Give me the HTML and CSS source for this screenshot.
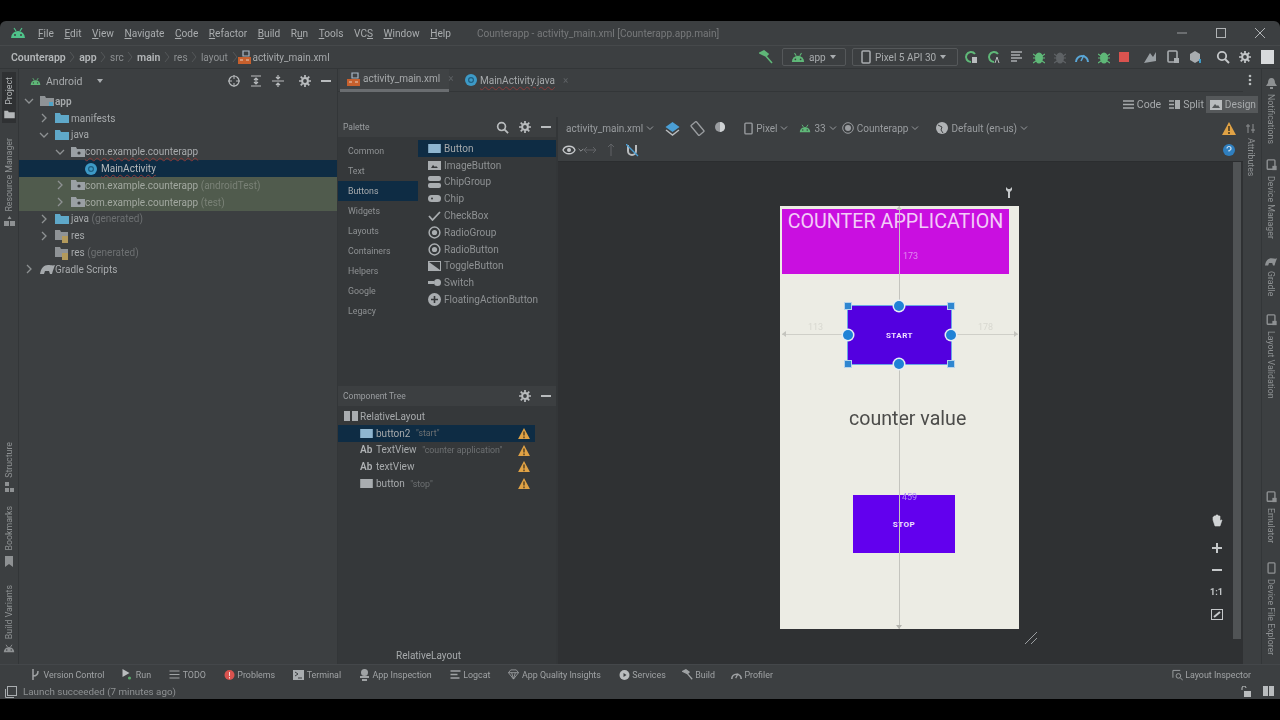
FILE: index.html
```html
<!DOCTYPE html>
<html lang="en">
<head>
  <meta charset="UTF-8">
  <title>Counterapp - activity_main.xml</title>
  <link rel="stylesheet" href="styles.css">
</head>
<body>
  <!-- shared icons -->
  <svg class="defs" width="0" height="0">
    <symbol id="droid" viewBox="0 0 16 12"><path d="M1 11a7 7 0 0 1 14 0z" fill="currentColor"/><path d="M4 1l2 3M12 1l-2 3" stroke="currentColor" stroke-width="1.2"/><circle cx="5" cy="8" r="1" fill="#3c3f41"/><circle cx="11" cy="8" r="1" fill="#3c3f41"/></symbol>
    <symbol id="gear" viewBox="0 0 14 14"><circle cx="7" cy="7" r="3.4" fill="none" stroke="currentColor" stroke-width="2.4"/><path d="M7 0v3M7 11v3M0 7h3M11 7h3M2 2l2 2M10 10l2 2M12 2l-2 2M4 10l-2 2" stroke="currentColor" stroke-width="2"/></symbol>
    <symbol id="search" viewBox="0 0 14 14"><circle cx="6" cy="6" r="4.2" fill="none" stroke="currentColor" stroke-width="1.8"/><path d="M9 9l4 4" stroke="currentColor" stroke-width="2"/></symbol>
    <symbol id="folder" viewBox="0 0 14 12"><path d="M0 1h5l1 2h8v8H0z" fill="currentColor"/></symbol>
    <symbol id="pkg" viewBox="0 0 14 12"><path d="M0 1h5l1 2h8v8H0z" fill="#9aa0a4"/><circle cx="8" cy="7" r="1.6" fill="#3c3f41"/></symbol>
    <symbol id="resfolder" viewBox="0 0 14 14"><path d="M0 1h5l1 2h7v8H0z" fill="#8f9396"/><rect x="7" y="7" width="6" height="7" fill="#b39a5c"/></symbol>
    <symbol id="xml" viewBox="0 0 13 14"><rect x="0" y="7" width="13" height="7" fill="#c7602d"/><path d="M5 1h6v5H5z" fill="none" stroke="#a9b7c6" stroke-width="1.2"/><path d="M2 10h3M8 10h3" stroke="#e8d0c0"/></symbol>
    <symbol id="cls" viewBox="0 0 12 12"><circle cx="6" cy="6" r="6" fill="#3d9ac7"/><circle cx="6" cy="6" r="2.4" fill="none" stroke="#1e5e80" stroke-width="1.2"/></symbol>
    <symbol id="chev-r" viewBox="0 0 8 10"><path d="M2 1l4 4-4 4" fill="none" stroke="currentColor" stroke-width="1.3"/></symbol>
    <symbol id="chev-d" viewBox="0 0 10 8"><path d="M1 2l4 4 4-4" fill="none" stroke="currentColor" stroke-width="1.3"/></symbol>
    <symbol id="warn" viewBox="0 0 14 13"><path d="M7 0l7 13H0z" fill="#e0a245"/><path d="M7 4v5M7 10v2" stroke="#4a3a20" stroke-width="1.6"/></symbol>
    <symbol id="bug" viewBox="0 0 12 14"><ellipse cx="6" cy="8" rx="4" ry="5.5" fill="currentColor"/><path d="M0 4l3 2M12 4l-3 2M0 8h2M10 8h2M0 13l3-2M12 13l-3-2" stroke="currentColor" stroke-width="1.2"/></symbol>
    <symbol id="phone" viewBox="0 0 10 14"><rect x="1" y="1" width="8" height="12" rx="1" fill="none" stroke="currentColor" stroke-width="1.5"/></symbol>
    <symbol id="monitor" viewBox="0 0 12 14"><rect x="1" y="1" width="9" height="11" rx="1" fill="none" stroke="currentColor" stroke-width="1.6"/><rect x="7" y="8" width="5" height="5" fill="currentColor"/></symbol>
    <symbol id="btn" viewBox="0 0 14 10"><rect width="14" height="10" fill="currentColor"/></symbol>
    <symbol id="radio" viewBox="0 0 14 14"><circle cx="7" cy="7" r="5.8" fill="none" stroke="currentColor" stroke-width="1.6"/><circle cx="7" cy="7" r="2.8" fill="currentColor"/></symbol>
    <symbol id="hammer" viewBox="0 0 14 14"><path d="M1 3l4-2 4 3-2 2zM6 5l7 8" fill="currentColor" stroke="currentColor" stroke-width="1.6"/></symbol>
    <symbol id="gauge" viewBox="0 0 14 12"><path d="M1 11a6 6 0 0 1 12 0" fill="none" stroke="currentColor" stroke-width="2"/><path d="M6 10l3-6" stroke="currentColor" stroke-width="1.6"/></symbol>
  </svg>

  <div class="window">
    <div class="titlebar">
      <svg class="logo" width="16" height="12"><use href="#droid"/></svg>
      <nav class="menu">
        <span><u>F</u>ile</span><span><u>E</u>dit</span><span><u>V</u>iew</span><span><u>N</u>avigate</span><span><u>C</u>ode</span><span><u>R</u>efactor</span><span><u>B</u>uild</span><span>R<u>u</u>n</span><span><u>T</u>ools</span><span>VC<u>S</u></span><span><u>W</u>indow</span><span><u>H</u>elp</span>
      </nav>
      <span class="title">Counterapp - activity_main.xml [Counterapp.app.main]</span>
      <div class="winbtns">
        <svg width="10" height="10"><path d="M0 5h10" stroke="#9a9da0"/></svg>
        <svg width="10" height="10"><rect x=".5" y=".5" width="9" height="9" fill="none" stroke="#b0b3b5"/></svg>
        <svg width="10" height="10"><path d="M0 0l10 10M10 0L0 10" stroke="#b0b3b5"/></svg>
      </div>
    </div>

    <div class="navbar">
      <div class="crumbs">
        <b>Counterapp</b><svg class="sep" width="6" height="12"><path d="M1 1l4 5-4 5" fill="none" stroke="#55585a"/></svg>
        <b>app</b><svg class="sep" width="6" height="12"><path d="M1 1l4 5-4 5" fill="none" stroke="#55585a"/></svg>
        <span>src</span><svg class="sep" width="6" height="12"><path d="M1 1l4 5-4 5" fill="none" stroke="#55585a"/></svg>
        <b>main</b><svg class="sep" width="6" height="12"><path d="M1 1l4 5-4 5" fill="none" stroke="#55585a"/></svg>
        <span>res</span><svg class="sep" width="6" height="12"><path d="M1 1l4 5-4 5" fill="none" stroke="#55585a"/></svg>
        <span>layout</span><svg class="sep" width="6" height="12"><path d="M1 1l4 5-4 5" fill="none" stroke="#55585a"/></svg>
        <svg class="crumb-icon" width="13" height="14"><use href="#xml"/></svg><span class="crumb-file">activity_main.xml</span>
      </div>
      <div class="runbar">
        <svg class="green tb" width="14" height="14"><use href="#hammer"/></svg>
        <div class="combo app-combo"><svg class="green" width="14" height="11"><use href="#droid"/></svg>app<i class="caret"></i></div>
        <div class="combo dev-combo"><svg class="grey" width="10" height="14"><use href="#phone"/></svg>Pixel 5 API 30<i class="caret"></i></div>
        <div class="run-icons">
          <svg class="green" width="14" height="14" viewBox="0 0 14 14"><path d="M11 4A5 5 0 1 0 7 12" fill="none" stroke="currentColor" stroke-width="2"/><rect x="8" y="7" width="5" height="6" fill="#b9bcbe"/></svg>
          <svg class="green" width="14" height="14" viewBox="0 0 14 14"><path d="M11 4A5 5 0 1 0 7 12" fill="none" stroke="currentColor" stroke-width="2"/><path d="M8 13l2-6 2 6" fill="none" stroke="#b9bcbe"/></svg>
          <svg class="grey" width="14" height="14" viewBox="0 0 14 14"><path d="M1 2h11M1 5h9M1 8h11M1 11h6" stroke="currentColor" stroke-width="1.6"/></svg>
          <svg class="green" width="12" height="14"><use href="#bug"/></svg>
          <svg class="dim" width="12" height="14"><use href="#bug"/></svg>
          <svg class="blue" width="14" height="12"><use href="#gauge"/></svg>
          <svg class="green" width="12" height="14"><use href="#bug"/></svg>
          <svg width="10" height="10"><rect width="10" height="10" fill="#d9534f"/></svg>
        </div>
        <div class="run-icons2">
          <svg class="blue" width="14" height="14" viewBox="0 0 14 14"><path d="M1 13L7 3l3 4 3-5v9z" fill="#9aa0a4"/></svg>
          <svg class="grey" width="12" height="14"><use href="#monitor"/></svg>
          <svg class="grey" width="13" height="14" viewBox="0 0 13 14"><path d="M6 1l5 3v6l-5 3-5-3V4z" fill="currentColor"/><path d="M11 9v4" stroke="#3d9ac7" stroke-width="2"/></svg>
        </div>
        <svg class="light" width="14" height="14"><use href="#search"/></svg>
        <svg class="light" width="12" height="12"><use href="#gear"/></svg>
        <div class="avatar"></div>
      </div>
    </div>

    <div class="main">
      <aside class="strip strip-left">
        <div class="strip-group">
          <div class="vtab active"><span>Project</span><svg width="11" height="9"><use href="#folder"/></svg></div>
          <div class="vtab"><span>Resource Manager</span><svg width="11" height="10" viewBox="0 0 11 10"><path d="M5.5 0l2 3h-4zM0 5h5v5H0zM6 5h5v5H6z" fill="currentColor"/></svg></div>
        </div>
        <div class="strip-group">
          <div class="vtab"><span>Structure</span><svg width="11" height="10" viewBox="0 0 11 10"><path d="M1 0h4v4H1zM1 6h4v4H1zM6 6h4v4H6z" fill="currentColor"/></svg></div>
          <div class="vtab"><span>Bookmarks</span><svg width="10" height="11" viewBox="0 0 10 11"><path d="M1 0h8v11L5 8l-4 3z" fill="currentColor"/></svg></div>
          <div class="vtab"><span>Build Variants</span><svg width="12" height="9"><use href="#droid"/></svg></div>
        </div>
      </aside>

      <section class="project">
        <div class="panel-head">
          <svg class="green" width="11" height="9"><use href="#droid"/></svg>
          <span class="panel-name">Android</span><i class="caret"></i>
          <div class="panel-tools">
            <svg width="12" height="12" viewBox="0 0 12 12"><circle cx="6" cy="6" r="5" fill="none" stroke="currentColor" stroke-width="1.2"/><path d="M6 0v4M6 8v4M0 6h4M8 6h4" stroke="currentColor"/></svg>
            <svg width="12" height="12" viewBox="0 0 12 12"><path d="M1 1h10M1 11h10M6 3v6M4 5l2-2 2 2M4 7l2 2 2-2" fill="none" stroke="currentColor" stroke-width="1.2"/></svg>
            <svg width="12" height="12" viewBox="0 0 12 12"><path d="M0 6h12M6 0v4M4 2l2 2 2-2M6 12V8M4 10l2-2 2 2" fill="none" stroke="currentColor" stroke-width="1.2"/></svg>
            <svg class="gap" width="12" height="12"><use href="#gear"/></svg>
            <svg width="10" height="12"><path d="M0 6h10" stroke="currentColor" stroke-width="2"/></svg>
          </div>
        </div>
        <ul class="tree">
          <li class="l1"><svg class="arrow" height="8"><use href="#chev-d"/></svg><svg class="ico" width="14" height="12" viewBox="0 0 14 12"><path d="M0 1h5l1 2h8v8H0z" fill="#8f9396"/><rect x="9" y="7" width="4" height="4" fill="#4fa3c7"/></svg><b>app</b></li>
          <li class="l2"><svg class="arrow" height="10"><use href="#chev-r"/></svg><svg class="ico blue-f" width="14" height="12"><use href="#folder"/></svg>manifests</li>
          <li class="l2"><svg class="arrow" height="8"><use href="#chev-d"/></svg><svg class="ico blue-f" width="14" height="12"><use href="#folder"/></svg>java</li>
          <li class="l3"><svg class="arrow" height="8"><use href="#chev-d"/></svg><svg class="ico" width="14" height="12"><use href="#pkg"/></svg><span class="squiggle">com.example.counterapp</span></li>
          <li class="l4 selected"><svg class="ico" width="12" height="12"><use href="#cls"/></svg><span class="squiggle">MainActivity</span></li>
          <li class="l3 testrow"><svg class="arrow" height="10"><use href="#chev-r"/></svg><svg class="ico" width="14" height="12"><use href="#pkg"/></svg>com.example.counterapp <em>(androidTest)</em></li>
          <li class="l3 testrow"><svg class="arrow" height="10"><use href="#chev-r"/></svg><svg class="ico" width="14" height="12"><use href="#pkg"/></svg>com.example.counterapp <em>(test)</em></li>
          <li class="l2"><svg class="arrow" height="10"><use href="#chev-r"/></svg><svg class="ico blue-f" width="14" height="12"><use href="#folder"/></svg>java <em>(generated)</em></li>
          <li class="l2"><svg class="arrow" height="10"><use href="#chev-r"/></svg><svg class="ico" width="14" height="14"><use href="#resfolder"/></svg>res</li>
          <li class="l2c"><svg class="ico" width="14" height="14"><use href="#resfolder"/></svg>res <em>(generated)</em></li>
          <li class="l1b"><svg class="arrow" height="10"><use href="#chev-r"/></svg><svg class="ico" width="15" height="10" viewBox="0 0 15 10"><path d="M0 10c1-6 4-9 8-9 3 0 5 1 7 0-1 3-2 5-3 9h-2l-1-3H5l-1 3z" fill="#a5a9ac"/></svg>Gradle Scripts</li>
        </ul>
      </section>

      <section class="editor">
        <div class="tabs">
          <div class="tab tab-on"><svg width="13" height="14"><use href="#xml"/></svg>activity_main.xml<span class="x">×</span></div>
          <div class="tab"><svg width="12" height="12"><use href="#cls"/></svg><span class="squiggle">MainActivity.java</span><span class="x">×</span></div>
          <svg class="more" width="4" height="12"><circle cx="2" cy="2" r="1.3" fill="#b9bcbe"/><circle cx="2" cy="6" r="1.3" fill="#b9bcbe"/><circle cx="2" cy="10" r="1.3" fill="#b9bcbe"/></svg>
        </div>
        <div class="modebar">
          <span class="mode"><svg width="11" height="9" viewBox="0 0 11 9"><path d="M0 1h11M0 4.5h11M0 8h11" stroke="currentColor" stroke-width="1.3"/></svg>Code</span>
          <span class="mode"><svg width="11" height="9" viewBox="0 0 11 9"><path d="M0 1h5M0 4.5h5M0 8h5" stroke="currentColor" stroke-width="1.3"/><rect x="6" width="5" height="9" fill="currentColor"/></svg>Split</span>
          <span class="mode mode-on"><svg width="12" height="10" viewBox="0 0 12 10"><rect width="12" height="10" fill="#b9bcbe"/><path d="M2 8l3-4 2 2 1-1 2 3z" fill="#55585a"/></svg>Design</span>
        </div>

        <div class="designer">
          <div class="left-col">
            <div class="palette">
              <div class="pal-head"><span>Palette</span><div class="pal-tools"><svg width="13" height="13"><use href="#search"/></svg><svg width="12" height="12"><use href="#gear"/></svg><svg width="10" height="12"><path d="M0 6h10" stroke="currentColor" stroke-width="2"/></svg></div></div>
              <div class="pal-body">
                <ul class="cats">
                  <li>Common</li><li>Text</li><li class="cat-on">Buttons</li><li>Widgets</li><li>Layouts</li><li>Containers</li><li>Helpers</li><li>Google</li><li>Legacy</li>
                </ul>
                <ul class="widgets">
                  <li class="widget-on"><svg class="wblue" width="13" height="9"><use href="#btn"/></svg>Button</li>
                  <li><svg width="13" height="9" viewBox="0 0 13 9"><rect width="13" height="9" fill="currentColor"/><path d="M3 7l2-3 2 2 1-1 2 2z" fill="#35383a"/></svg>ImageButton</li>
                  <li><svg width="13" height="12" viewBox="0 0 13 12"><rect width="13" height="5" rx="2" fill="currentColor"/><rect y="7" width="13" height="5" rx="2" fill="currentColor"/></svg>ChipGroup</li>
                  <li><svg width="13" height="7" viewBox="0 0 13 7"><rect width="13" height="7" rx="3.5" fill="currentColor"/><circle cx="4" cy="3.5" r="1" fill="#35383a"/></svg>Chip</li>
                  <li><svg width="13" height="10" viewBox="0 0 13 10"><path d="M1 5l3.5 4L12 1" fill="none" stroke="currentColor" stroke-width="1.8"/></svg>CheckBox</li>
                  <li><svg width="13" height="13"><use href="#radio"/></svg>RadioGroup</li>
                  <li><svg width="13" height="13"><use href="#radio"/></svg>RadioButton</li>
                  <li><svg width="13" height="10" viewBox="0 0 13 10"><rect x=".5" y=".5" width="12" height="9" fill="none" stroke="currentColor"/><path d="M1 1l11 8H1z" fill="currentColor"/></svg>ToggleButton</li>
                  <li><svg width="13" height="7" viewBox="0 0 13 7"><rect y="2" width="6" height="3" fill="currentColor"/><circle cx="9.5" cy="3.5" r="3.5" fill="currentColor"/></svg>Switch</li>
                  <li><svg width="13" height="13" viewBox="0 0 13 13"><circle cx="6.5" cy="6.5" r="6.5" fill="currentColor"/><path d="M6.5 3v7M3 6.5h7" stroke="#35383a" stroke-width="1.6"/></svg>FloatingActionButton</li>
                </ul>
              </div>
            </div>
            <div class="comp-tree">
              <div class="pal-head"><span>Component Tree</span><div class="pal-tools"><svg width="12" height="12"><use href="#gear"/></svg><svg width="10" height="12"><path d="M0 6h10" stroke="currentColor" stroke-width="2"/></svg></div></div>
              <ul class="nodes">
                <li class="root"><svg width="14" height="10" viewBox="0 0 14 10"><rect width="6" height="10" fill="#a9adb0"/><rect x="8" width="6" height="10" fill="#a9adb0"/></svg>RelativeLayout</li>
                <li class="node-on"><svg class="wblue" width="13" height="9"><use href="#btn"/></svg>button2 <em>"start"</em><svg class="warn" width="12" height="11"><use href="#warn"/></svg></li>
                <li><span class="ab">Ab</span>TextView <em>"counter application"</em><svg class="warn" width="12" height="11"><use href="#warn"/></svg></li>
                <li><span class="ab">Ab</span>textView<svg class="warn" width="12" height="11"><use href="#warn"/></svg></li>
                <li><svg width="13" height="9"><use href="#btn"/></svg>button <em>"stop"</em><svg class="warn" width="12" height="11"><use href="#warn"/></svg></li>
              </ul>
            </div>
          </div>

          <div class="canvas-col">
            <div class="dtool">
              <span class="dt file">activity_main.xml<svg width="8" height="6"><use href="#chev-d"/></svg></span>
              <svg class="dt layers" width="15" height="15" viewBox="0 0 15 15"><path d="M7.5 1l7 5-7 5-7-5z" fill="#4b9fd5"/><path d="M1 9l6.5 5L14 9" fill="none" stroke="#b9bcbe" stroke-width="1.4"/></svg>
              <svg class="dt rot" width="15" height="15" viewBox="0 0 15 15"><rect x="4" y="1" width="7" height="13" rx="1" transform="rotate(-40 7.5 7.5)" fill="none" stroke="#9a9da0" stroke-width="1.3"/></svg>
              <svg class="dt night" width="14" height="14" viewBox="0 0 14 14"><circle cx="6" cy="6" r="5" fill="#9a9da0"/><path d="M6 1a5 5 0 0 1 0 10z" fill="#cfd2d4"/></svg>
              <span class="dt pixel"><svg width="9" height="13"><use href="#phone"/></svg>Pixel<svg width="8" height="6"><use href="#chev-d"/></svg></span>
              <span class="dt api"><svg class="green" width="12" height="9"><use href="#droid"/></svg>33<svg width="8" height="6"><use href="#chev-d"/></svg></span>
              <span class="dt theme"><svg width="12" height="12" viewBox="0 0 12 12"><circle cx="6" cy="6" r="5.3" fill="none" stroke="currentColor"/><circle cx="6" cy="6" r="3" fill="currentColor"/></svg>Counterapp<svg width="8" height="6"><use href="#chev-d"/></svg></span>
              <span class="dt locale"><svg width="12" height="12" viewBox="0 0 12 12"><circle cx="6" cy="6" r="6" fill="#b0b3b5"/><path d="M2 3l4 2-1 3 2 3" fill="none" stroke="#3c3f41"/></svg>Default (en-us)<svg width="8" height="6"><use href="#chev-d"/></svg></span>
              <svg class="warn-top" width="14" height="13"><use href="#warn"/></svg>
            </div>
            <div class="dtool2">
              <svg width="14" height="10" viewBox="0 0 14 10"><path d="M1 5c2-5 10-5 12 0-2 5-10 5-12 0z" fill="none" stroke="#c5c8ca" stroke-width="1.3"/><circle cx="7" cy="5" r="2" fill="#c5c8ca"/></svg>
              <svg class="eye-chev" width="6" height="6"><use href="#chev-d"/></svg>
              <svg width="12" height="10" viewBox="0 0 12 10"><path d="M0 5h12M3 2L0 5l3 3M9 2l3 3-3 3" fill="none" stroke="#606366"/></svg>
              <svg class="off" width="10" height="12" viewBox="0 0 10 12"><path d="M5 0v12M2 3l3-3 3 3" fill="none" stroke="#606366"/></svg>
              <svg class="off" width="13" height="13" viewBox="0 0 13 13"><path d="M2 1v6a4 4 0 0 0 8 0V1" fill="none" stroke="#b9bcbe" stroke-width="2"/><path d="M0 0l12 12" stroke="#4b9fd5" stroke-width="1.3"/></svg>
              <svg class="help" width="12" height="12" viewBox="0 0 12 12"><circle cx="6" cy="6" r="6" fill="#2f7fbf"/><path d="M4 4.5a2 2 0 1 1 2 2v1" fill="none" stroke="#cfe3f2" stroke-width="1.2"/></svg>
            </div>
            <div class="surface">
              <div class="canvas">
                <svg class="wrench" width="8" height="11" viewBox="0 0 8 11"><path d="M1 0v3l2 2v6h2V5l2-2V0L5 2H3z" fill="#c5c8ca"/></svg>
                <div class="phone">
                  <div class="v-guide"></div>
                  <div class="h-guide"></div>
                  <div class="apptitle"><span>COUNTER APPLICATION</span></div>
                  <div class="mbtn start">START
                    <i class="h tl"></i><i class="h tr"></i><i class="h bl"></i><i class="h br"></i>
                    <i class="d dt-top"></i><i class="d dt-bot"></i><i class="d dt-l"></i><i class="d dt-r"></i>
                  </div>
                  <div class="counter">counter value</div>
                  <div class="mbtn stop">STOP</div>
                  <span class="dim-lbl d173">173</span>
                  <span class="dim-lbl d113">113</span>
                  <span class="dim-lbl d178">178</span>
                  <span class="dim-lbl d459">459</span>
                </div>
                <svg class="resize" width="12" height="12" viewBox="0 0 12 12"><path d="M0 12L12 0M6 12l6-6" stroke="#9a9da0"/></svg>
              </div>
              <div class="zoombar">
                <svg width="12" height="13" viewBox="0 0 12 13"><path d="M2 6V3h1v3-4h2v4-5h2v5-4h2v5l1-1h1l-2 6H4z" fill="#d0d3d5" stroke="#d0d3d5" stroke-width=".6"/></svg>
                <div class="zoomset">
                  <svg width="10" height="10"><path d="M5 0v10M0 5h10" stroke="#c5c8ca" stroke-width="2"/></svg>
                  <svg width="10" height="10"><path d="M0 5h10" stroke="#c5c8ca" stroke-width="2"/></svg>
                  <span>1:1</span>
                  <svg width="12" height="11" viewBox="0 0 12 11"><rect x=".5" y=".5" width="11" height="10" fill="none" stroke="#c5c8ca"/><path d="M3 8l6-5" stroke="#c5c8ca" stroke-width="2"/></svg>
                </div>
              </div>
              <div class="vscroll"></div>
            </div>
          </div>
        </div>
        <div class="layout-crumb">RelativeLayout</div>
      </section>

      <aside class="attr-strip">
        <svg width="11" height="9" viewBox="0 0 11 9"><path d="M3 0v9M8 0v9M1 2h4M6 6h4" stroke="currentColor"/></svg>
        <span>Attributes</span>
      </aside>

      <aside class="strip strip-right">
        <div class="strip-group">
          <div class="vtab"><svg width="11" height="11" viewBox="0 0 11 11"><path d="M5.5 0C3 0 2 2 2 5L0 8h11L9 5c0-3-1-5-3.500-5zM4 9h3v2H4z" fill="currentColor"/></svg><span>Notifications</span></div>
          <div class="vtab"><svg width="11" height="12"><use href="#monitor"/></svg><span>Device Manager</span></div>
          <div class="vtab"><svg width="12" height="9" viewBox="0 0 15 10"><path d="M0 10c1-6 4-9 8-9 3 0 5 1 7 0-1 3-2 5-3 9h-2l-1-3H5l-1 3z" fill="currentColor"/></svg><span>Gradle</span></div>
          <div class="vtab"><svg width="11" height="12"><use href="#monitor"/></svg><span>Layout Validation</span></div>
        </div>
        <div class="strip-group">
          <div class="vtab"><svg width="11" height="12"><use href="#monitor"/></svg><span>Emulator</span></div>
          <div class="vtab"><svg width="11" height="12"><use href="#phone"/></svg><span>Device File Explorer</span></div>
        </div>
      </aside>
    </div>

    <div class="bottombar">
      <span class="bt"><svg width="9" height="11" viewBox="0 0 9 11"><path d="M2 0v11M2 7c4 0 5-2 5-5" fill="none" stroke="currentColor" stroke-width="1.5"/></svg>Version Control</span>
      <span class="bt"><svg width="10" height="11" viewBox="0 0 10 11"><path d="M0 0l7 4-7 4z" fill="#b9bcbe"/><circle cx="7" cy="9" r="1.6" fill="#59a869"/></svg>Run</span>
      <span class="bt"><svg width="10" height="9" viewBox="0 0 10 9"><path d="M0 1h10M0 4.500h10M0 8h10" stroke="currentColor"/></svg>TODO</span>
      <span class="bt"><svg width="10" height="10" viewBox="0 0 10 10"><circle cx="5" cy="5" r="5" fill="#d9534f"/><path d="M5 2v4M5 7v1.500" stroke="#f3dada"/></svg>Problems</span>
      <span class="bt"><svg width="11" height="10" viewBox="0 0 11 10"><rect width="11" height="10" fill="#a9adb0"/><path d="M2 2l3 2-3 2M5 8h4" fill="none" stroke="#3c3f41"/></svg>Terminal</span>
      <span class="bt"><svg width="9" height="12" viewBox="0 0 9 12"><circle cx="4.500" cy="3.500" r="3.500" fill="currentColor"/><path d="M0 7h9v2H0zM2 10h5v2H2z" fill="currentColor"/></svg>App Inspection</span>
      <span class="bt"><svg width="10" height="9" viewBox="0 0 10 9"><path d="M0 1h10M0 4.500h7M0 8h9" stroke="currentColor" stroke-width="1.3"/></svg>Logcat</span>
      <span class="bt"><svg width="12" height="11" viewBox="0 0 12 11"><path d="M3 .5h6l2.500 3L6 10.500.5 3.500zM.5 3.500h11M4 3.500l2 7 2-7" fill="none" stroke="currentColor" stroke-width=".9"/></svg>App Quality Insights</span>
      <span class="bt"><svg width="10" height="10" viewBox="0 0 10 10"><circle cx="5" cy="5" r="5" fill="#b9bcbe"/><path d="M4 3l3 2-3 2z" fill="#3c3f41"/></svg>Services</span>
      <span class="bt bt-tight"><svg width="11" height="11"><use href="#hammer"/></svg>Build</span>
      <span class="bt bt-tight"><svg width="12" height="10"><use href="#gauge"/></svg>Profiler</span>
      <span class="bt layout-insp"><svg width="12" height="12" viewBox="0 0 12 12"><path d="M1 9V1h8" fill="none" stroke="currentColor"/><circle cx="7" cy="7" r="2.500" fill="none" stroke="currentColor"/><path d="M9 9l3 3" stroke="currentColor"/></svg>Layout Inspector</span>
    </div>

    <div class="statusbar">
      <svg width="12" height="12" viewBox="0 0 12 12"><rect x="2.500" y=".5" width="9" height="9" fill="none" stroke="#a9adb0"/><path d="M.5 3v8.500H9" fill="none" stroke="#a9adb0"/></svg>
      <span class="status-text">Launch succeeded (7 minutes ago)</span>
      <div class="status-right">
        <svg width="11" height="11" viewBox="0 0 11 11"><path d="M1 4V2a2 2 0 0 1 4 0" fill="none" stroke="#b9bcbe"/><rect x="3" y="5" width="7" height="6" fill="#b9bcbe"/></svg>
        <svg width="11" height="10" viewBox="0 0 11 10"><path d="M0 0h5v10H0zM6 0h5v10H6z" fill="#b9bcbe"/></svg>
      </div>
    </div>
  </div>
</body>
</html>
```

FILE: styles.css
```css
* { box-sizing: border-box; }
html, body { height: 100%; }
body {
  margin: 0;
  padding-top: 21px;
  background: #000;
  color: #a7aaac;
  font-family: Roboto, "Noto Sans", sans-serif;
  font-size: 10px;
  overflow: hidden;
}
ul { list-style: none; margin: 0; padding: 0; }
svg { flex: none; display: block; }
em { font-style: normal; color: #6d7072; }
.defs { position: absolute; }
.green { color: #5fb878; }
.grey { color: #a9adb0; }
.dim { color: #5e6265; }
.blue { color: #5aa6d6; }
.light { color: #c5c8ca; }
.caret {
  display: inline-block;
  width: 0; height: 0;
  border-left: 3.5px solid transparent;
  border-right: 3.5px solid transparent;
  border-top: 4px solid #a9adb0;
}
.squiggle { text-decoration: underline wavy #8a3a3a 1px; text-underline-offset: 2px; }

.window {
  height: 678px;
  background: #3c3f41;
  border-radius: 6px 6px 0 0;
  display: flex;
  flex-direction: column;
  filter: blur(0.5px);
}

/* title */
.titlebar { height: 25px; display: flex; align-items: center; padding-left: 10px; border-bottom: 1px solid #46494b; }
.logo { color: #4fc38a; margin-right: 12px; }
.menu { display: flex; gap: 10.5px; font-size: 10.15px; color: #a9acae; }
.title { margin-left: 26px; color: #77797b; font-size: 10.1px; }
.winbtns { margin-left: auto; display: flex; gap: 29px; padding-right: 15px; }

.navbar { height: 23px; display: flex; align-items: center; padding-left: 11px; border-bottom: 1px solid #333638; }
.crumbs { display: flex; align-items: center; gap: 3.2px; color: #8e9193; font-size: 10px; }
.crumbs b { color: #b4b7b9; font-weight: 600; font-size: 10.5px; }
.sep { margin: 0 .5px; }
.crumb-icon { margin-left: -3px; margin-right: -2px; }
.crumb-file { color: #a7aaac; }
.runbar { margin-left: auto; display: flex; align-items: center; }
.runbar .tb { margin-right: 9px; }
.combo { height: 18px; border: 1px solid #55585a; border-radius: 2px; display: flex; align-items: center; gap: 4px; font-size: 10px; color: #a9acae; padding: 0 8px; white-space: nowrap; }
.app-combo { width: 64px; margin-right: 6px; }
.dev-combo { width: 106px; margin-right: 6px; }
.run-icons { display: flex; align-items: center; gap: 9px; width: 179px; padding-left: 0; }
.run-icons2 { display: flex; align-items: center; gap: 10px; width: 73px; }
.runbar .light { margin-right: 9px; }
.avatar { width: 13px; height: 14px; background: #d8dadc; margin: 0 6px 0 1px; }

.main { flex: 1; display: flex; min-height: 0; }

/* side strips */
.strip { width: 19px; display: flex; flex-direction: column; justify-content: space-between; background: #3c3f41; color: #8e9193; }
.strip-group { display: flex; flex-direction: column; }
.vtab { display: flex; flex-direction: column; align-items: center; gap: 5px; font-size: 8.8px; }
.vtab span { writing-mode: vertical-rl; }
.strip-left .vtab span { transform: rotate(180deg); }
.strip-left { border-right: 1px solid #333638; padding: 3px 0 11px; }
.strip-left .strip-group + .strip-group .vtab + .vtab { margin-top: 18px; }
.strip-left .strip-group + .strip-group .vtab:nth-child(2) { margin-top: 14px; }
.strip-left .strip-group:first-child .vtab + .vtab { margin-top: 15px; }
.strip-left .vtab.active { background: #2f3133; color: #b4b7b9; margin: 0 2px; padding: 5px 0 4px; }
.strip-right { padding: 9px 0 9px; border-left: 1px solid #333638; }
.strip-right .strip-group:first-child .vtab + .vtab { margin-top: 18px; }
.strip-right .strip-group:first-child .vtab:nth-child(2) { margin-top: 15px; }
.strip-right .strip-group + .strip-group .vtab + .vtab { margin-top: 18px; }

.attr-strip { width: 18px; margin-top: 55px; padding-right: 3px; display: flex; flex-direction: column; align-items: center; gap: 5px; color: #8e9193; font-size: 8.8px; background: #3c3f41; }
.attr-strip span { writing-mode: vertical-rl; }

/* project panel */
.project { width: 319px; display: flex; flex-direction: column; border-right: 1px solid #333638; }
.panel-head { height: 24px; display: flex; align-items: center; padding-left: 11px; gap: 5px; }
.panel-name { font-size: 10.5px; margin-right: 9px; }
.panel-tools { margin-left: auto; display: flex; align-items: center; gap: 10px; padding-right: 6px; color: #b9bcbe; }
.panel-tools .gap { margin-left: 5px; }
.tree li { height: 16.8px; display: flex; align-items: center; color: #a7aaac; white-space: pre; }
.tree .arrow { width: 10px; color: #8e9193; margin-right: 6px; }
.tree .ico { margin-right: 2px; }
.blue-f { color: #5fa8c9; }
.tree .l1 { padding-left: 5px; }
.tree .l1 .ico { margin-right: 1px; }
.tree .l1 b { font-weight: 600; }
.tree .l2 { padding-left: 20px; }
.tree .l3 { padding-left: 36px; }
.tree .l3 .ico { margin-right: 0; }
.tree .l4 { padding-left: 66px; color: #b7babc; }
.tree .l4 .ico { margin-right: 4px; }
.tree .l2c { padding-left: 36px; }
.tree .l1b { padding-left: 5px; }
.tree .l1b .ico { margin-right: 0; }
.tree .selected { background: #0e2c44; }
.tree .testrow { background: #505b4d; color: #a2a8a0; }
.tree .testrow em { color: #7a8277; }

/* editor */
.editor { flex: 1; min-width: 0; display: flex; flex-direction: column; position: relative; }
.tabs { height: 23px; display: flex; align-items: center; padding-left: 2px; border-bottom: 1px solid #333638; }
.tab { height: 23px; display: flex; align-items: center; gap: 3px; padding: 0 8px; color: #a7aaac; }
.tab .x { color: #5e6265; margin-left: 5px; font-size: 10px; }
.tab-on { border-bottom: 3px solid #6a6d70; background: #404345; width: 109px; padding-left: 7px; }
.tab-on + .tab { padding-left: 16px; }
.more { margin-left: auto; margin-right: -9px; }
.modebar { height: 25px; display: flex; align-items: center; justify-content: flex-end; gap: 8px; margin-right: -15px; color: #a7aaac; font-size: 10.5px; }
.mode { height: 17px; display: flex; align-items: center; gap: 3px; }
.mode-on { background: #55585a; padding: 0 2px 0 4px; margin-left: -6px; font-size: 10.2px; }

.designer { flex: 1; display: flex; min-height: 0; }
.left-col { width: 220px; display: flex; flex-direction: column; background: #35383a; border-right: 2px solid #333638; }
.palette { height: 266px; }
.pal-head { height: 20px; display: flex; align-items: center; padding: 0 5px; font-size: 8.5px; color: #9a9da0; background: #3c3f41; }
.pal-tools { margin-left: auto; display: flex; align-items: center; gap: 10px; color: #b9bcbe; }
.pal-body { display: flex; }
.cats { width: 80px; padding-top: 3.5px; }
.cats li { height: 20.1px; display: flex; align-items: center; padding-left: 10px; font-size: 8.8px; color: #8e9193; }
.cats .cat-on { background: #0e2c44; color: #a9acae; }
.widgets { flex: 1; padding-top: 3px; }
.widgets li { height: 16.8px; display: flex; align-items: center; gap: 3px; padding-left: 10px; color: #8e9193; }
.widgets li svg { width: 13px; color: #a9adb0; }
.widgets .widget-on { background: #0e2c44; color: #a7aaac; }
.wblue { color: #8fb6d0 !important; }

.comp-tree { flex: 1; }
.comp-tree .pal-head { margin-top: 3px; }
.nodes { padding-top: 2px; }
.nodes li { height: 16.8px; display: flex; align-items: center; gap: 3px; padding-left: 22px; color: #a7aaac; white-space: pre; width: 197px; position: relative; }
.nodes li svg:first-child { color: #a9adb0; }
.nodes em { font-size: 8.8px; color: #6d7072; }
.nodes .root { padding-left: 6px; gap: 2px; }
.nodes .node-on { background: #0e2c44; }
.ab { font-weight: 600; font-size: 10px; width: 13px; color: #b0b3b5; }
.warn { position: absolute; right: 5px; top: 3px; }

.canvas-col { flex: 1; min-width: 0; display: flex; flex-direction: column; }
.dtool { height: 22px; display: flex; align-items: center; padding: 0 7px 0 8px; color: #9a9da0; }
.dt { display: flex; align-items: center; gap: 3px; }
.dt svg { color: #9a9da0; }
.layers { margin-left: 11px; }
.rot { margin-left: 10px; }
.night { margin-left: 9px; }
.pixel { margin-left: 16px; }
.api { margin-left: 11px; }
.api svg:first-child { color: #5fb878; }
.theme { margin-left: 5px; }
.locale { margin-left: 17px; }
.warn-top { margin-left: auto; }
.dtool2 { height: 23px; display: flex; align-items: center; padding: 0 8px 0 4px; border-bottom: 1px solid #2b2d2f; }
.dtool2 .eye-chev { margin: 0 0 0 2px; }
.dtool2 .off { margin-left: 10px; }
.help { margin-left: auto; }

.surface { flex: 1; display: flex; background: #2f3133; min-height: 0; }
.canvas { flex: 1; position: relative; padding: 44px 0 0 222px; }
.wrench { position: absolute; left: 447px; top: 25px; }
.resize { position: absolute; left: 467px; top: 470px; }
.phone { width: 239px; height: 423px; background: #ececE4; position: relative; }
.v-guide { position: absolute; left: 119px; top: 0; bottom: 0; width: 1px; background: #c4c4be; z-index: 2; }
.v-guide::before, .v-guide::after { content: ""; position: absolute; left: -3px; border-left: 3.5px solid transparent; border-right: 3.5px solid transparent; }
.v-guide::before { top: 0; border-bottom: 4px solid #c4c4be; }
.v-guide::after { bottom: 0; border-top: 4px solid #b4b4ae; }
.h-guide { position: absolute; left: 2px; right: 1px; top: 128px; height: 1px; background: #cfcfc8; }
.h-guide::before, .h-guide::after { content: ""; position: absolute; top: -3px; border-top: 3.5px solid transparent; border-bottom: 3.5px solid transparent; }
.h-guide::before { left: 0; border-right: 4px solid #c4c4be; }
.h-guide::after { right: 0; border-left: 4px solid #c4c4be; }

/* preview contents sit where the layout editor put them */
.apptitle { position: absolute; left: 2px; top: 3px; width: 227px; height: 65px; background: #c90fe0; color: #f3cbf8; font-size: 19.7px; text-align: center; line-height: 24px; padding-top: 1px; white-space: nowrap; }
.mbtn { position: absolute; color: #f0e0ff; font-size: 8px; font-weight: 700; letter-spacing: .5px; display: flex; align-items: center; justify-content: center; background: #5c00e8; }
.start { left: 68px; top: 100px; width: 103px; height: 58px; z-index: 3; background: #5300e0; box-shadow: 0 0 0 1px #6aa6e6; }
.stop { left: 73px; top: 289px; width: 102px; height: 58px; background: #6200ee; }
.counter { position: absolute; left: 69px; top: 201px; font-size: 19.6px; color: #4c4c4a; }
.h { position: absolute; width: 6px; height: 6px; background: #2f86d0; box-shadow: 0 0 0 1px #b6d4ec; }
.tl { left: -3px; top: -3px; } .tr { right: -3px; top: -3px; }
.bl { left: -3px; bottom: -3px; } .br { right: -3px; bottom: -3px; }
.d { position: absolute; width: 10px; height: 10px; border-radius: 50%; background: #1f82d6; box-shadow: 0 0 0 1.5px #e6eef5; }
.dt-top { left: 46px; top: -5px; } .dt-bot { left: 46px; bottom: -5px; }
.dt-l { left: -5px; top: 24px; } .dt-r { right: -5px; top: 24px; }
.dim-lbl { position: absolute; font-size: 9px; color: #d8d8d0; z-index: 4; }
.d173 { left: 123px; top: 45px; color: #e08cf0; }
.d113 { left: 28px; top: 116px; }
.d178 { left: 198px; top: 116px; }
.d459 { left: 122px; top: 286px; color: #b08cf5; }

.zoombar { width: 25px; margin: 352px 4px 0 0; display: flex; flex-direction: column; align-items: center; }
.zoomset { margin-top: 16px; display: flex; flex-direction: column; align-items: center; gap: 12px; color: #c5c8ca; font-size: 9px; font-weight: 700; }
.zoomset span { line-height: 10px; }
.vscroll { width: 8px; background: #505355; margin: 0 2px 25px 0; }

.layout-crumb { position: absolute; left: 58px; bottom: 3px; color: #a7aaac; }

/* bottom */
.bottombar { height: 20px; display: flex; align-items: center; padding-left: 30px; gap: 18px; font-size: 8.9px; color: #a0a3a5; border-top: 1px solid #44474a; }
.bt { display: flex; align-items: center; gap: 2.5px; white-space: nowrap; }
.bt svg { width: 11px; }
.bt-tight { margin-left: -2px; }
.layout-insp { margin-left: auto; padding-right: 29px; }
.statusbar { height: 15px; display: flex; align-items: center; padding-left: 5px; gap: 6px; font-size: 9.8px; color: #8e9193; }
.status-right { margin-left: auto; display: flex; gap: 11px; padding-right: 6px; }
```
